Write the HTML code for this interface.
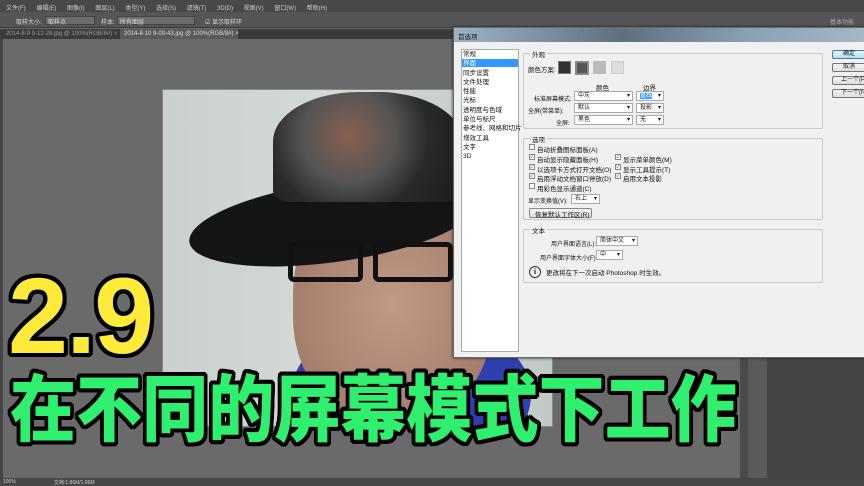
<!DOCTYPE html>
<html><head><meta charset="utf-8">
<style>
*{margin:0;padding:0;box-sizing:border-box}
body{width:864px;height:486px;overflow:hidden;background:#6a6a6a;font-family:"Liberation Sans","Noto Sans CJK SC",sans-serif;position:relative;color:#ddd}
.abs{position:absolute}
.t{font-size:6px;white-space:nowrap;position:absolute}
.d{font-size:6.5px;color:#111;white-space:nowrap;position:absolute}
.dd{position:absolute;background:#fff;border:1px solid #aaa;height:10px;font-size:6px;color:#111;padding-left:3px;line-height:8px}
.dd:after{content:"▾";position:absolute;right:2px;top:0;font-size:6px}
.grp{position:absolute;border:1px solid #c8c8c8;border-radius:2px}
.cb{position:absolute;width:6px;height:6px;border:1px solid #888;background:#fff;font-size:5px;line-height:5px;color:#333;text-align:center}
.btn{position:absolute;left:832px;width:40px;height:9px;background:linear-gradient(#f6f6f6,#dcdcdc);border:1px solid #777;border-radius:2px;font-size:6px;color:#111;line-height:7px;padding-left:10px}
.big{position:absolute;font-weight:900;white-space:nowrap;
text-shadow:4px 0 0 #000,-4px 0 0 #000,0 4px 0 #000,0 -4px 0 #000,3px 3px 0 #000,-3px 3px 0 #000,3px -3px 0 #000,-3px -3px 0 #000,2px 4px 0 #000,-2px 4px 0 #000,4px 2px 0 #000,-4px 2px 0 #000,2px -4px 0 #000,-2px -4px 0 #000,4px -2px 0 #000,-4px -2px 0 #000}
</style></head><body>
<div class="abs" style="left:0;top:0;width:864px;height:12px;background:#484848"></div>
<div class="t" style="left:6px;top:3px;color:#ccc;word-spacing:9px">文件(F) 编辑(E) 图像(I) 图层(L) 类型(Y) 选择(S) 滤镜(T) 3D(D) 视图(V) 窗口(W) 帮助(H)</div>
<div class="abs" style="left:0;top:12px;width:864px;height:16px;background:#555;border-bottom:1px solid #3a3a3a"></div>
<div class="t" style="left:16px;top:17px">取样大小:</div>
<div class="abs" style="left:45px;top:16px;width:50px;height:9px;background:#6c6c6c;border:1px solid #444"></div>
<div class="t" style="left:48px;top:17px">取样点</div>
<div class="t" style="left:101px;top:17px">样本:</div>
<div class="abs" style="left:117px;top:16px;width:78px;height:9px;background:#6c6c6c;border:1px solid #444"></div>
<div class="t" style="left:120px;top:17px">所有图层</div>
<div class="t" style="left:205px;top:17px">☑ 显示取样环</div>
<div class="t" style="left:830px;top:17px;color:#aaa">基本功能</div>
<div class="abs" style="left:0;top:29px;width:864px;height:10px;background:#3b3b3b"></div>
<div class="t" style="left:6px;top:31px;color:#999">2014-8-9 9-12-28.jpg @ 100%(RGB/8#) ×</div>
<div class="abs" style="left:120px;top:29px;width:118px;height:10px;background:#5a5a5a"></div>
<div class="t" style="left:124px;top:31px;color:#ddd">2014-8-10 9-00-43.jpg @ 100%(RGB/8#) ×</div>
<div class="abs" style="left:0;top:39px;width:3px;height:440px;background:#444"></div>
<div class="abs" style="left:740px;top:357px;width:8px;height:121px;background:#4a4a4a"></div>
<div class="abs" style="left:748px;top:357px;width:19px;height:121px;background:#5a5a5a"></div>
<div class="abs" style="left:767px;top:357px;width:97px;height:121px;background:#454545"></div>
<div class="abs" style="left:162px;top:89px;width:391px;height:338px;background:linear-gradient(90deg,#c9d0cf,#d4d9d6 40%,#c2c8c4);overflow:hidden;border:1px solid #888">
 <div class="abs" style="left:128px;top:225px;width:240px;height:160px;border-radius:50%;background:#2f3fb0"></div>
 <div class="abs" style="left:130px;top:95px;width:200px;height:240px;border-radius:45%;background:radial-gradient(#c09a86,#9a7262)"></div>
 <div class="abs" style="left:25px;top:92px;width:290px;height:80px;border-radius:50%;background:#141414;transform:rotate(-8deg)"></div>
 <div class="abs" style="left:110px;top:2px;width:190px;height:110px;border-radius:45% 45% 10% 10%;background:radial-gradient(circle at 40% 40%,#8a6050,#555 35%,#2a2a2a 60%,#1a1a1a)"></div>
 <div class="abs" style="left:125px;top:152px;width:75px;height:40px;border:5px solid #111;border-radius:6px"></div>
 <div class="abs" style="left:210px;top:152px;width:80px;height:40px;border:5px solid #111;border-radius:6px"></div>
</div>
<div class="abs" style="left:453px;top:27px;width:420px;height:331px;background:#f0f0f0;border:1px solid #666;box-shadow:0 0 3px #222"></div>
<div class="abs" style="left:454px;top:28px;width:420px;height:14px;background:linear-gradient(90deg,#9eb3c8,#5f6f80 40%,#8aa0b5 70%,#a8b8c8)"></div>
<div class="d" style="left:458px;top:31px">首选项</div>
<div class="abs" style="left:461px;top:49px;width:58px;height:303px;background:#fff;border:1px solid #aaa"></div>
<div class="abs" style="left:462px;top:59px;width:56px;height:8px;background:#3399ff"></div>
<div class="d" style="left:463px;top:50px;line-height:9.3px">常规<br><span style="color:#fff">界面</span><br>同步设置<br>文件处理<br>性能<br>光标<br>透明度与色域<br>单位与标尺<br>参考线、网格和切片<br>增效工具<br>文字<br>3D</div>
<div class="grp" style="left:523px;top:53px;width:300px;height:76px"></div>
<div class="d" style="left:530px;top:49px;background:#f0f0f0;padding:0 2px">外观</div>
<div class="d" style="left:528px;top:64px">颜色方案:</div>
<div class="abs" style="left:558px;top:61px;width:13px;height:13px;background:#333;border:1px solid #777"></div>
<div class="abs" style="left:575px;top:61px;width:14px;height:14px;background:#555;border:2px solid #888"></div>
<div class="abs" style="left:593px;top:61px;width:13px;height:13px;background:#bbb"></div>
<div class="abs" style="left:611px;top:61px;width:13px;height:13px;background:#ddd;border:1px solid #ccc"></div>
<div class="d" style="left:596px;top:82px">颜色</div>
<div class="d" style="left:643px;top:82px">边界</div>
<div class="d" style="left:534px;top:94px;font-size:6px">标准屏幕模式:</div>
<div class="dd" style="left:574px;top:91px;width:59px">中灰</div>
<div class="dd" style="left:636px;top:91px;width:28px"><span style="background:#39f;color:#fff">直线</span></div>
<div class="d" style="left:528px;top:106px;font-size:6px">全屏(带菜单):</div>
<div class="dd" style="left:574px;top:103px;width:59px">默认</div>
<div class="dd" style="left:636px;top:103px;width:28px">投影</div>
<div class="d" style="left:556px;top:118px;font-size:6px">全屏:</div>
<div class="dd" style="left:574px;top:115px;width:59px">黑色</div>
<div class="dd" style="left:636px;top:115px;width:28px">无</div>
<div class="grp" style="left:523px;top:138px;width:300px;height:82px"></div>
<div class="d" style="left:530px;top:134px;background:#f0f0f0;padding:0 2px">选项</div>
<div class="cb" style="left:529px;top:144px"></div><div class="d" style="left:537px;top:144px">自动折叠图标面板(A)</div>
<div class="cb" style="left:529px;top:154px">✓</div><div class="d" style="left:537px;top:154px">自动显示隐藏面板(H)</div>
<div class="cb" style="left:529px;top:164px">✓</div><div class="d" style="left:537px;top:164px">以选项卡方式打开文档(O)</div>
<div class="cb" style="left:529px;top:173px">✓</div><div class="d" style="left:537px;top:173px">启用浮动文档窗口停放(D)</div>
<div class="cb" style="left:529px;top:183px"></div><div class="d" style="left:537px;top:183px">用彩色显示通道(C)</div>
<div class="cb" style="left:615px;top:154px">✓</div><div class="d" style="left:623px;top:154px">显示菜单颜色(M)</div>
<div class="cb" style="left:615px;top:164px">✓</div><div class="d" style="left:623px;top:164px">显示工具提示(T)</div>
<div class="cb" style="left:615px;top:173px">✓</div><div class="d" style="left:623px;top:173px">启用文本投影</div>
<div class="d" style="left:528px;top:196px;font-size:6px">显示变换值(V):</div>
<div class="dd" style="left:571px;top:194px;width:29px">右上</div>
<div class="abs" style="left:529px;top:208px;width:63px;height:10px;background:linear-gradient(#f8f8f8,#ddd);border:1px solid #888;border-radius:2px"></div>
<div class="d" style="left:535px;top:209px">恢复默认工作区(R)</div>
<div class="grp" style="left:523px;top:229px;width:300px;height:54px"></div>
<div class="d" style="left:530px;top:225px;background:#f0f0f0;padding:0 2px">文本</div>
<div class="d" style="left:551px;top:239px;font-size:6px">用户界面语言(L):</div>
<div class="dd" style="left:596px;top:236px;width:42px">简体中文</div>
<div class="d" style="left:540px;top:253px;font-size:6px">用户界面字体大小(F):</div>
<div class="dd" style="left:596px;top:250px;width:27px">中</div>
<div class="abs" style="left:529px;top:266px;width:12px;height:12px;border:1px solid #333;border-radius:50%;font-size:8px;color:#222;text-align:center;line-height:10px;font-family:'Liberation Serif',serif;font-weight:bold">i</div>
<div class="d" style="left:546px;top:267px">更改将在下一次启动 Photoshop 时生效。</div>
<div class="btn" style="top:50px;background:linear-gradient(#e6f4fb,#b7dcef);border-color:#3c7fb1">确定</div>
<div class="btn" style="top:63px">取消</div>
<div class="btn" style="top:76px;padding-left:8px">上一个(P)</div>
<div class="btn" style="top:89px;padding-left:8px">下一个(N)</div>
<div class="abs" style="left:0;top:478px;width:864px;height:8px;background:#474747"></div>
<div class="t" style="left:3px;top:479px;font-size:5px;color:#ccc">100%</div>
<div class="t" style="left:54px;top:479px;font-size:5px;color:#ccc">文档:1.86M/1.86M</div>
<div class="big" style="left:8px;top:262px;font-size:108px;line-height:108px;color:#ffea3a;font-family:'Liberation Sans',sans-serif;letter-spacing:-2px">2.9</div>
<div class="big" style="left:10px;top:362px;font-size:73px;line-height:84px;color:#2ef06e;font-family:'Noto Sans CJK SC',sans-serif;transform:scaleX(0.905);transform-origin:0 0">在不同的屏幕模式下工作</div>
</body></html>
